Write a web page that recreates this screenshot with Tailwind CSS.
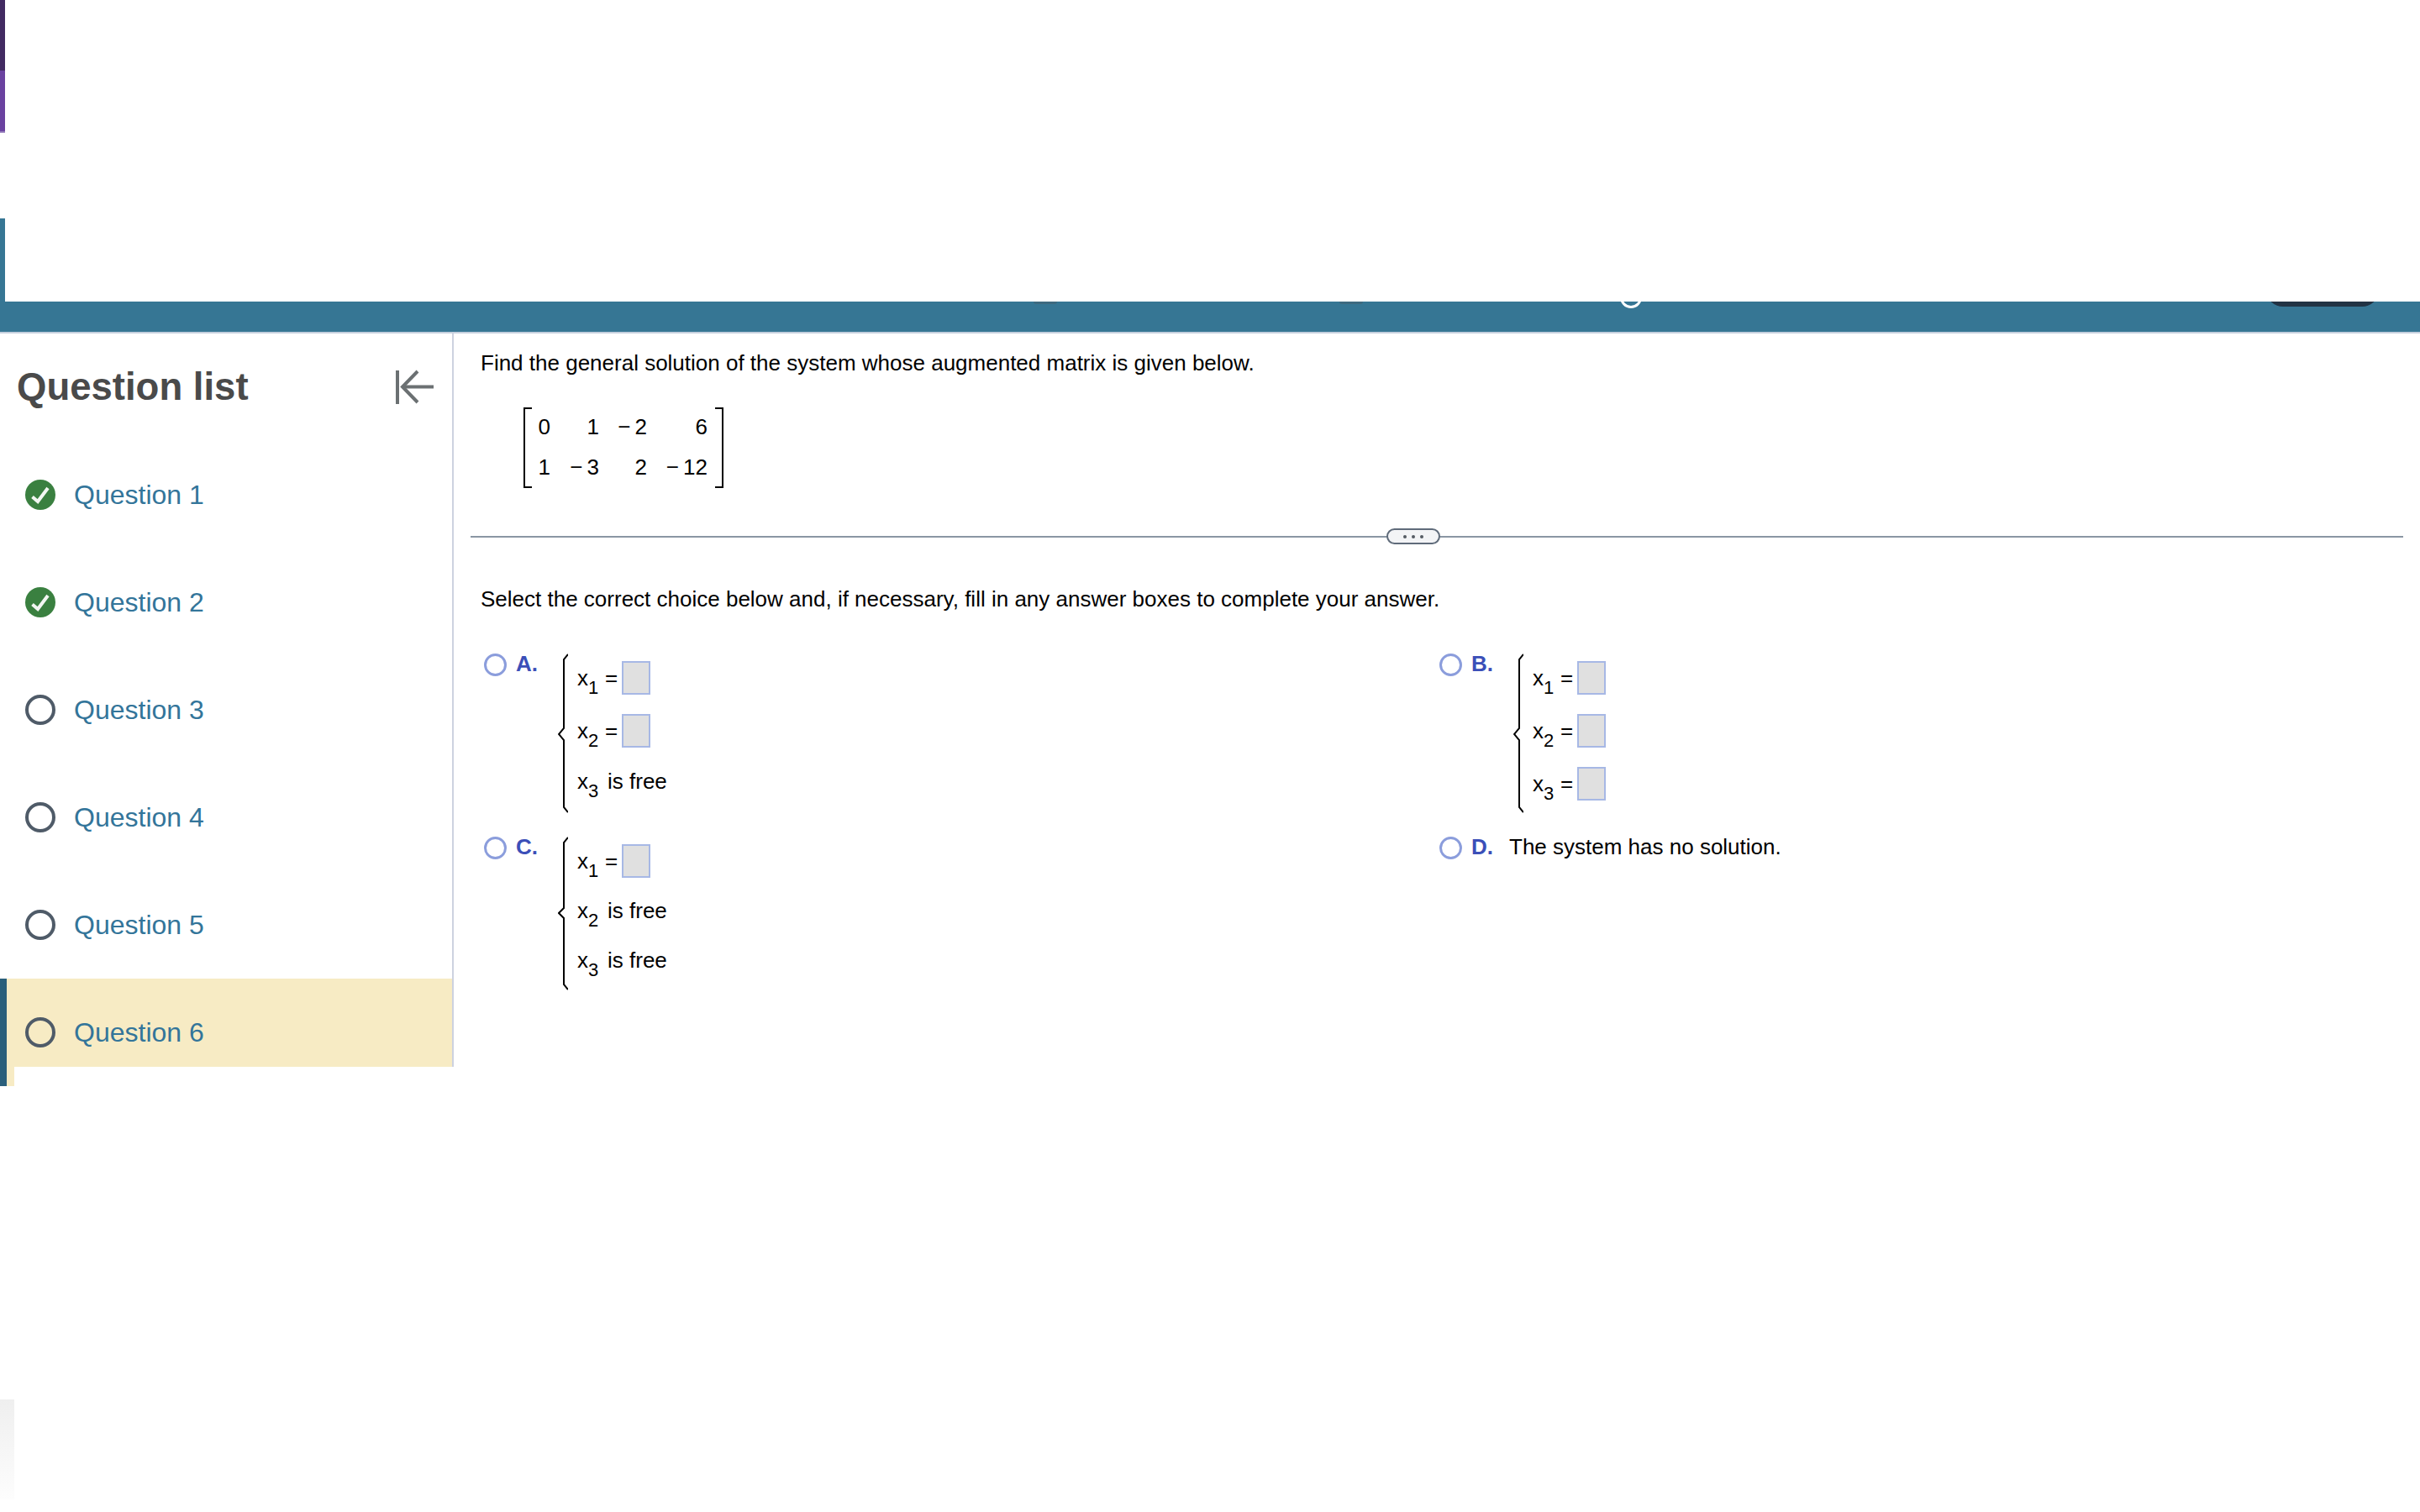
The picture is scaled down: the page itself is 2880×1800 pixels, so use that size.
<!DOCTYPE html>
<html lang="en">
<head>
    <meta charset="UTF-8">
    <title>Question list</title>
    <script src="https://cdn.jsdelivr.net/npm/@tailwindcss/browser@4"></script>
</head>
<body class="bg-white min-h-screen font-['Liberation_Sans',Arial,sans-serif] text-black overflow-hidden">
    <!-- clipped header strips -->
    <div class="h-[359px] w-[6px] flex flex-col">
        <div class="h-[84px] bg-[#412a61]"></div>
        <div class="h-[72px] bg-[#6a42a0]"></div>
        <div class="h-[2px] bg-[#8f74b8]"></div>
        <div class="h-[102px]"></div>
        <div class="h-[99px] bg-[#367694]"></div>
    </div>
    <div class="relative h-[38px] bg-[#367694] border-b-2 border-[#c5cfdd] overflow-hidden">
        <div class="absolute left-[1230px] top-0 w-[28px] h-[3px] rounded-b-full bg-[#3e6a80]"></div>
        <div class="absolute left-[1594px] top-0 w-[28px] h-[3px] rounded-b-full bg-[#3e6a80]"></div>
        <div class="absolute left-[1928px] top-[-18px] w-[26px] h-[26px] rounded-full border-[3px] border-white"></div>
        <div class="absolute left-[2697px] top-[-20px] w-[134px] h-[26px] rounded-b-[20px] bg-[#223344]"></div>
    </div>

    <div class="flex items-start">
        <!-- sidebar -->
        <aside class="w-[540px] shrink-0">
            <div class="h-[873px] border-r-2 border-[#cdd2e0] flex flex-col">
                <div class="flex items-center justify-between h-[128px] pl-[20px] pr-[22px]">
                    <h2 class="text-[45.500px] font-bold text-[#4a4a4a] leading-none">Question list</h2>
                    <svg class="w-[45px] h-[42px]" viewBox="0 0 45 42" fill="none" stroke="#6b7072" stroke-width="4">
                        <path d="M2 1v40"/>
                        <path d="M45 20.500H9"/>
                        <path d="M26 2 8 20.500 26 39"/>
                    </svg>
                </div>
                <div class="h-[128px] flex items-center pl-[30px] gap-[22px] text-[32px] text-[#33759a]">
                    <svg class="w-[36px] h-[36px]" viewBox="0 0 36 36"><circle cx="18" cy="18" r="18" fill="#3a8040"/><path d="M8.500 20.500 15 26 27 10" fill="none" stroke="#f2f6f2" stroke-width="4"/></svg>
                    <span>Question 1</span>
                </div>
                <div class="h-[128px] flex items-center pl-[30px] gap-[22px] text-[32px] text-[#33759a]">
                    <svg class="w-[36px] h-[36px]" viewBox="0 0 36 36"><circle cx="18" cy="18" r="18" fill="#3a8040"/><path d="M8.500 20.500 15 26 27 10" fill="none" stroke="#f2f6f2" stroke-width="4"/></svg>
                    <span>Question 2</span>
                </div>
                <div class="h-[128px] flex items-center pl-[30px] gap-[22px] text-[32px] text-[#33759a]">
                    <span class="w-[36px] h-[36px] rounded-full border-[4px] border-[#4f5b68]"></span>
                    <span>Question 3</span>
                </div>
                <div class="h-[128px] flex items-center pl-[30px] gap-[22px] text-[32px] text-[#33759a]">
                    <span class="w-[36px] h-[36px] rounded-full border-[4px] border-[#4f5b68]"></span>
                    <span>Question 4</span>
                </div>
                <div class="h-[128px] flex items-center pl-[30px] gap-[22px] text-[32px] text-[#33759a]">
                    <span class="w-[36px] h-[36px] rounded-full border-[4px] border-[#4f5b68]"></span>
                    <span>Question 5</span>
                </div>
                <div class="flex-1 bg-[#f7ebc4] border-l-[8px] border-[#2a5f7b] flex items-center pl-[22px] gap-[22px] text-[32px] text-[#33759a] pt-[22px]">
                    <span class="w-[36px] h-[36px] rounded-full border-[4px] border-[#4f5b68]"></span>
                    <span>Question 6</span>
                </div>
            </div>
            <div class="h-[23px] w-[17px] bg-[#f7ebc4] border-l-[8px] border-[#2a5f7b]"></div>
        </aside>

        <!-- question pane -->
        <main class="flex-1 pl-[20px] pr-[20px] pt-[20px]">
            <div class="pl-[12px] text-[26px] leading-[30px]">
                <p>Find the general solution of the system whose augmented matrix is given below.</p>
                <div class="mt-[38px] ml-[51px] w-[238px] h-[96px] flex justify-between">
                    <div class="w-[10px] border-2 border-r-0 border-black"></div>
                    <div class="mr-auto grid grid-cols-[22px_58px_57px_72px] content-start gap-y-[18px] text-right pt-[8px]">
                        <span>0</span><span>1</span><span>&minus;&thinsp;2</span><span>6</span>
                        <span>1</span><span>&minus;&thinsp;3</span><span>2</span><span>&minus;&thinsp;12</span>
                    </div>
                    <div class="w-[10px] border-2 border-l-0 border-black"></div>
                </div>
            </div>

            <div class="relative mt-[57px] h-[2px] bg-[#8a96a3]">
                <div class="absolute left-[1090px] top-[-9px] w-[64px] h-[19px] rounded-full border-2 border-[#5f6b7a] bg-[#f3f4f6] flex items-center justify-center gap-[6px]">
                    <span class="w-[4px] h-[4px] rounded-full bg-[#555b63]"></span>
                    <span class="w-[4px] h-[4px] rounded-full bg-[#555b63]"></span>
                    <span class="w-[4px] h-[4px] rounded-full bg-[#555b63]"></span>
                </div>
            </div>

            <div class="pl-[12px] text-[26px] leading-[30px]">
                <p class="mt-[58px]">Select the correct choice below and, if necessary, fill in any answer boxes to complete your answer.</p>

                <div class="mt-[47px] grid grid-cols-[1137px_1fr] grid-rows-[218px_auto]">
                    <!-- A -->
                    <div class="flex items-start">
                        <span class="mt-[3px] ml-[4px] w-[27px] h-[27px] rounded-full border-[3px] border-[#8b9ddc] shrink-0"></span>
                        <span class="ml-[11px] w-[50px] font-bold text-[#3b4fb8]">A.</span>
                        <svg class="w-[12px] h-[190px] shrink-0 mt-[3px]" viewBox="0 0 12 190" fill="none" stroke="#000" stroke-width="2"><path d="M12 1 7 7V89L1 96 7 103V183L12 189"/></svg>
                        <div class="ml-[11px] flex flex-col gap-[23px] mt-[12px]">
                            <div class="h-[40px] flex items-center">
                                <span class="w-[33px]">x<sub class="text-[22px] bottom-[-10px]">1</sub></span><span class="w-[20px]">=</span>
                                <span class="w-[34px] h-[40px] bg-[#e0e0e0] border-2 border-[#a7b8e5]"></span>
                            </div>
                            <div class="h-[40px] flex items-center">
                                <span class="w-[33px]">x<sub class="text-[22px] bottom-[-10px]">2</sub></span><span class="w-[20px]">=</span>
                                <span class="w-[34px] h-[40px] bg-[#e0e0e0] border-2 border-[#a7b8e5]"></span>
                            </div>
                            <div class="h-[40px] mt-[-3px] flex items-center">
                                <span class="w-[36px]">x<sub class="text-[22px] bottom-[-10px]">3</sub></span><span>is free</span>
                            </div>
                        </div>
                    </div>
                    <!-- B -->
                    <div class="flex items-start">
                        <span class="mt-[3px] ml-[4px] w-[27px] h-[27px] rounded-full border-[3px] border-[#8b9ddc] shrink-0"></span>
                        <span class="ml-[11px] w-[50px] font-bold text-[#3b4fb8]">B.</span>
                        <svg class="w-[12px] h-[190px] shrink-0 mt-[3px]" viewBox="0 0 12 190" fill="none" stroke="#000" stroke-width="2"><path d="M12 1 7 7V89L1 96 7 103V183L12 189"/></svg>
                        <div class="ml-[11px] flex flex-col gap-[23px] mt-[12px]">
                            <div class="h-[40px] flex items-center">
                                <span class="w-[33px]">x<sub class="text-[22px] bottom-[-10px]">1</sub></span><span class="w-[20px]">=</span>
                                <span class="w-[34px] h-[40px] bg-[#e0e0e0] border-2 border-[#a7b8e5]"></span>
                            </div>
                            <div class="h-[40px] flex items-center">
                                <span class="w-[33px]">x<sub class="text-[22px] bottom-[-10px]">2</sub></span><span class="w-[20px]">=</span>
                                <span class="w-[34px] h-[40px] bg-[#e0e0e0] border-2 border-[#a7b8e5]"></span>
                            </div>
                            <div class="h-[40px] flex items-center">
                                <span class="w-[33px]">x<sub class="text-[22px] bottom-[-10px]">3</sub></span><span class="w-[20px]">=</span>
                                <span class="w-[34px] h-[40px] bg-[#e0e0e0] border-2 border-[#a7b8e5]"></span>
                            </div>
                        </div>
                    </div>
                    <!-- C -->
                    <div class="flex items-start">
                        <span class="mt-[3px] ml-[4px] w-[27px] h-[27px] rounded-full border-[3px] border-[#8b9ddc] shrink-0"></span>
                        <span class="ml-[11px] w-[50px] font-bold text-[#3b4fb8]">C.</span>
                        <svg class="w-[12px] h-[183px] shrink-0 mt-[3px]" viewBox="0 0 12 183" fill="none" stroke="#000" stroke-width="2"><path d="M12 1 7 7V85L1 91 7 97V176L12 182"/></svg>
                        <div class="ml-[11px] flex flex-col mt-[12px]">
                            <div class="h-[40px] flex items-center">
                                <span class="w-[33px]">x<sub class="text-[22px] bottom-[-10px]">1</sub></span><span class="w-[20px]">=</span>
                                <span class="w-[34px] h-[40px] bg-[#e0e0e0] border-2 border-[#a7b8e5]"></span>
                            </div>
                            <div class="h-[40px] mt-[19px] flex items-center">
                                <span class="w-[36px]">x<sub class="text-[22px] bottom-[-10px]">2</sub></span><span>is free</span>
                            </div>
                            <div class="h-[40px] mt-[19px] flex items-center">
                                <span class="w-[36px]">x<sub class="text-[22px] bottom-[-10px]">3</sub></span><span>is free</span>
                            </div>
                        </div>
                    </div>
                    <!-- D -->
                    <div class="flex items-start">
                        <span class="mt-[3px] ml-[4px] w-[27px] h-[27px] rounded-full border-[3px] border-[#8b9ddc] shrink-0"></span>
                        <span class="ml-[11px] w-[45px] font-bold text-[#3b4fb8]">D.</span>
                        <span>The system has no solution.</span>
                    </div>
                </div>
            </div>
        </main>
    </div>

    <!-- faint shadow at bottom left -->
    <div class="fixed left-0 bottom-[15px] w-[17px] h-[119px] bg-gradient-to-b from-[#efefef] to-[#fdfdfd]"></div>
</body>
</html>
